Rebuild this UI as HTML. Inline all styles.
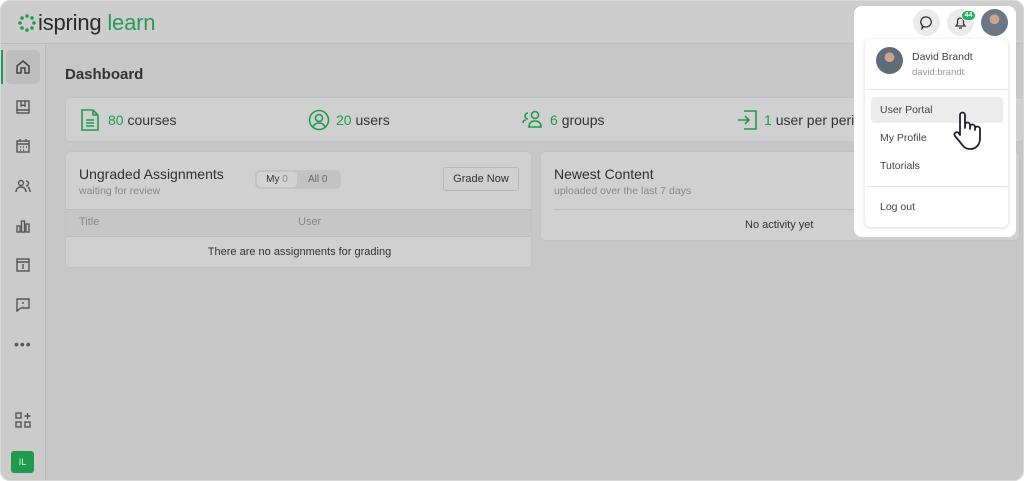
<!DOCTYPE html>
<html><head><style>
*{box-sizing:border-box;margin:0;padding:0}
body{width:1024px;height:481px;background:#fff;font-family:"Liberation Sans",sans-serif;position:relative;overflow:hidden}
.frame{position:absolute;left:0;top:0;width:1024px;height:481px;border:1.5px solid #d8d8d8;border-radius:10px;overflow:hidden;background:#c7c7c7}
.hdr{position:absolute;left:0;top:0;width:1022px;height:43px;background:#cdcdcd;border-bottom:1px solid #bdbdbd}
.side{position:absolute;left:0;top:43px;width:45px;height:440px;background:#cbcbcb;border-right:1px solid #bcbcbc}
.abs{position:absolute}
.card{position:absolute;background:#d0d0d0;border:1px solid #c2c2c2;border-radius:5px}
.g{color:#1f9a4f}
.t{color:#333}
svg{position:absolute}
</style></head><body>
<div class="frame">
<div class="hdr"></div>
<div class="side"></div>
<svg style="left:16px;top:12px" width="20" height="20" viewBox="0 0 20 20" fill="#1f9a4f"><circle cx="10" cy="3" r="1.8"/><circle cx="15" cy="5" r="1.8"/><circle cx="17" cy="10" r="1.8"/><circle cx="15" cy="15" r="1.8"/><circle cx="10" cy="17" r="1.8"/><circle cx="5" cy="15" r="1.8"/><circle cx="3" cy="10" r="1.8"/><circle cx="5" cy="5" r="1.8"/></svg>
<div class="abs" style="left:37px;top:9px;font-size:22px;letter-spacing:-0.2px"><span style="color:#2a2a2a">ispring</span> <span style="color:#2a9a56">learn</span></div>
<div class="abs" style="left:5px;top:49px;width:34px;height:34px;background:#bdbdbd;border-radius:5px"></div>
<div class="abs" style="left:0;top:49px;width:2px;height:34px;background:#1f9a4f"></div>
<svg style="left:14px;top:58px" width="16" height="16" viewBox="0 0 16 16" fill="none" stroke="#444" stroke-width="1.5"><path d="M2 14V7l6-5 6 5v7h-4V9H6v5z"/></svg>
<svg style="left:14px;top:98px" width="16" height="16" viewBox="0 0 16 16" fill="none" stroke="#555" stroke-width="1.4"><rect x="2" y="2" width="12" height="12"/><path d="M2 11h12M6 2v5l2-1 2 1V2"/></svg>
<svg style="left:14px;top:137px" width="16" height="16" viewBox="0 0 16 16" fill="none" stroke="#555" stroke-width="1.4"><rect x="2" y="3" width="12" height="11"/><path d="M2 6h12M5 1v3M11 1v3M5 9h1M8 9h1M11 9h1M5 12h1M8 12h1"/></svg>
<svg style="left:14px;top:177px" width="16" height="16" viewBox="0 0 16 16" fill="none" stroke="#555" stroke-width="1.4"><circle cx="6" cy="5" r="2.5"/><path d="M1 14c0-3 2-5 5-5s5 2 5 5M11 3a2.5 2.5 0 010 5M13 9c1 1 2 3 2 5"/></svg>
<svg style="left:14px;top:217px" width="16" height="16" viewBox="0 0 16 16" fill="none" stroke="#555" stroke-width="1.4"><rect x="2" y="8" width="3" height="6"/><rect x="6.5" y="3" width="3" height="11"/><rect x="11" y="6" width="3" height="8"/></svg>
<svg style="left:14px;top:256px" width="16" height="16" viewBox="0 0 16 16" fill="none" stroke="#555" stroke-width="1.4"><rect x="2" y="2" width="12" height="12"/><path d="M2 5h12M8 7v5"/></svg>
<svg style="left:14px;top:296px" width="16" height="16" viewBox="0 0 16 16" fill="none" stroke="#555" stroke-width="1.4"><path d="M2 2h12v9H6l-4 3z"/><path d="M8 5v2M8 9v.5"/></svg>
<div class="abs" style="left:13px;top:335px;font-size:14px;color:#555;letter-spacing:1px">•••</div>
<svg style="left:14px;top:411px" width="16" height="16" viewBox="0 0 16 16" fill="none" stroke="#555" stroke-width="1.4"><rect x="1" y="1" width="5" height="5"/><rect x="1" y="10" width="5" height="5"/><rect x="10" y="10" width="5" height="5"/><path d="M12.5 1v6M9.5 4h6"/></svg>
<div class="abs" style="left:10px;top:450px;width:23px;height:22px;background:#1f9a4f;border-radius:3px;color:#cfe;font-size:9px;text-align:center;line-height:22px">IL</div>
<div class="abs t" style="left:64px;top:65px;font-size:15px;font-weight:bold;color:#333">Dashboard</div>
<div class="card" style="left:64px;top:96px;width:960px;height:45px"></div>
<svg style="left:79px;top:107px" width="20" height="24" viewBox="0 0 20 24" fill="none" stroke="#1f9a4f" stroke-width="1.6"><path d="M2 2h11l5 5v15H2z M13 2v5h5 M6 12h8M6 15h8M6 18h8"/></svg>
<div class="abs" style="left:107px;top:111px;font-size:14px"><span class="g">80</span> <span class="t">courses</span></div>
<svg style="left:307px;top:108px" width="22" height="22" viewBox="0 0 22 22" fill="none" stroke="#1f9a4f" stroke-width="1.6"><circle cx="11" cy="11" r="9.5"/><circle cx="11" cy="9" r="3.5"/><path d="M5 18c1-3 3-4 6-4s5 1 6 4"/></svg>
<div class="abs" style="left:335px;top:111px;font-size:14px"><span class="g">20</span> <span class="t">users</span></div>
<svg style="left:521px;top:108px" width="22" height="20" viewBox="0 0 22 20" fill="none" stroke="#1f9a4f" stroke-width="1.6"><circle cx="13" cy="6" r="3.5"/><path d="M7 18c0-4 2-6 6-6s6 2 6 6zM6 4a3 3 0 100 6M1 14c0-2 1-3 3-3"/></svg>
<div class="abs" style="left:549px;top:111px;font-size:14px"><span class="g">6</span> <span class="t">groups</span></div>
<svg style="left:735px;top:108px" width="22" height="22" viewBox="0 0 22 22" fill="none" stroke="#1f9a4f" stroke-width="1.6"><path d="M8 2h12v18H8M2 11h11M9 7l4 4-4 4"/></svg>
<div class="abs" style="left:763px;top:111px;font-size:14px"><span class="g">1</span> <span class="t">user per period</span></div>
<div class="card" style="left:64px;top:150px;width:467px;height:117px;overflow:hidden">
<div class="abs" style="left:13px;top:14px;font-size:14px;color:#2f2f2f">Ungraded Assignments</div>
<div class="abs" style="left:13px;top:33px;font-size:10.5px;color:#888">waiting for review</div>
<div class="abs" style="left:189px;top:18px;width:86px;height:19px;background:#c3c3c3;border-radius:5px"></div>
<div class="abs" style="left:191px;top:20px;width:40px;height:15px;background:#d3d3d3;border-radius:4px;font-size:10px;color:#333;text-align:center;line-height:15px">My <span style="color:#888">0</span></div>
<div class="abs" style="left:242px;top:20px;font-size:10px;color:#666;line-height:15px">All 0</div>
<div class="abs" style="left:377px;top:15px;width:76px;height:24px;border:1px solid #b8b8b8;border-radius:3px;font-size:11px;color:#333;text-align:center;line-height:22px">Grade Now</div>
<div class="abs" style="left:0;top:57px;width:467px;height:28px;background:#c6c6c6;border-top:1px solid #bdbdbd;border-bottom:1px solid #bdbdbd"></div>
<div class="abs" style="left:13px;top:64px;font-size:11px;color:#888">Title</div>
<div class="abs" style="left:232px;top:64px;font-size:11px;color:#888">User</div>
<div class="abs" style="left:0;top:94px;width:467px;text-align:center;font-size:11px;color:#333">There are no assignments for grading</div>
</div>
<div class="card" style="left:539px;top:150px;width:480px;height:90px">
<div class="abs" style="left:13px;top:14px;font-size:14px;color:#2f2f2f">Newest Content</div>
<div class="abs" style="left:13px;top:33px;font-size:10.5px;color:#888">uploaded over the last 7 days</div>
<div class="abs" style="left:13px;top:57px;width:460px;height:1px;background:#bdbdbd"></div>
<div class="abs" style="left:204px;top:67px;font-size:11px;color:#333">No activity yet</div>
</div>
<div class="abs" style="left:853px;top:5px;width:162px;height:231px;background:#fff;border-radius:8px"></div>
<div class="abs" style="left:912px;top:8px;width:27px;height:27px;background:#ebebeb;border-radius:50%"></div>
<svg style="left:918px;top:14px" width="15" height="15" viewBox="0 0 15 15" fill="none" stroke="#333" stroke-width="1.3"><path d="M7.5 2a5.5 5 0 11-3 9.5L3 13.5l.3-3A5 5 0 017.5 2z"/></svg>
<div class="abs" style="left:946px;top:8px;width:27px;height:27px;background:#ebebeb;border-radius:50%"></div>
<svg style="left:952px;top:14px" width="15" height="15" viewBox="0 0 15 15" fill="none" stroke="#333" stroke-width="1.3"><path d="M3 11h9l-1.5-2V6a3 3 0 00-6 0v3z M6 13h3"/></svg>
<div class="abs" style="left:960px;top:9px;width:15px;height:11px;background:#1fb35c;border-radius:6px;border:1px solid #fff;font-size:7px;color:#fff;text-align:center;line-height:9px;font-weight:bold">44</div>
<div class="abs" style="left:980px;top:8px;width:27px;height:27px;border-radius:50%;background:radial-gradient(circle at 50% 38%,#c9a48f 0 22%,#6b7785 23% 100%)"></div>
<div class="abs" style="left:864px;top:38px;width:143px;height:188px;background:#fff;border-radius:6px;box-shadow:0 1px 5px rgba(0,0,0,.15)"></div>
<div class="abs" style="left:875px;top:46px;width:27px;height:27px;border-radius:50%;background:radial-gradient(circle at 50% 38%,#c9a48f 0 22%,#5f6b78 23% 100%)"></div>
<div class="abs" style="left:911px;top:50px;font-size:10.5px;color:#444">David Brandt</div>
<div class="abs" style="left:911px;top:66px;font-size:9.5px;color:#999">david.brandt</div>
<div class="abs" style="left:865px;top:88px;width:141px;height:1px;background:#e5e5e5"></div>
<div class="abs" style="left:870px;top:96px;width:132px;height:26px;background:#ececec;border-radius:4px"></div>
<div class="abs" style="left:879px;top:103px;font-size:10.5px;color:#444">User Portal</div>
<div class="abs" style="left:879px;top:131px;font-size:10.5px;color:#444">My Profile</div>
<div class="abs" style="left:879px;top:159px;font-size:10.5px;color:#444">Tutorials</div>
<div class="abs" style="left:865px;top:185px;width:141px;height:1px;background:#e5e5e5"></div>
<div class="abs" style="left:879px;top:200px;font-size:10.5px;color:#444">Log out</div>
<svg style="left:950px;top:110px" width="32" height="42" viewBox="0 0 32 42" fill="#fff" stroke="#1f2235" stroke-width="1.8" stroke-linejoin="round"><path d="M9 24V4a2.5 2.5 0 015 0v13V14a2.5 2.5 0 015 0v4-2a2.5 2.5 0 015 0v3-1a2.5 2.5 0 015 0v9c0 7-4 11-10 11-5 0-7-3-10-7l-5-6a2.3 2.3 0 013.5-3z"/></svg>
</div>
</body></html>
